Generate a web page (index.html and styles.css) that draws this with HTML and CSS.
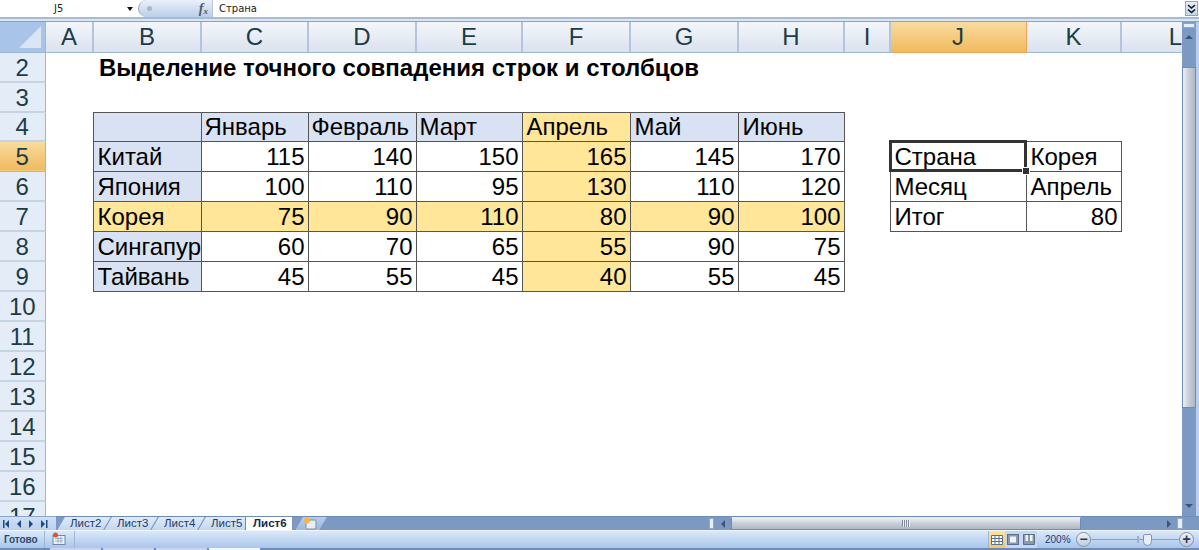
FILE: index.html
```html
<!DOCTYPE html>
<html lang="ru">
<head>
    <meta charset="UTF-8">
    <title>Лист6</title>
    <link rel="stylesheet" href="styles.css">
</head>
<body>
    <!-- formula bar -->
    <div class="formula-bar">
        <div class="name-box">J5</div>
        <div class="name-arrow"></div>
        <div class="fx-pill">
            <span class="fx-dot"></span>
            <span class="fx">f<sub>x</sub></span>
        </div>
        <div class="formula-text">Страна</div>
        <div class="expand-btn">
            <svg width="9" height="10" viewBox="0 0 9 10"><path d="M1 1l3.500 3L8 1M1 5.500l3.500 3L8 5.500" fill="none" stroke="#111" stroke-width="1.500"/></svg>
        </div>
    </div>
    <div class="bar-line"></div>

    <!-- sheet -->
    <div class="sheet-row">
        <div class="sheet">
            <table class="grid">
                <colgroup>
                    <col class="c-head"><col class="c-a"><col class="c-std"><col class="c-c"><col class="c-std"><col class="c-e">
                    <col class="c-std"><col class="c-std"><col class="c-e"><col class="c-i"><col class="c-j"><col class="c-k"><col class="c-l">
                </colgroup>
                <tr class="col-heads">
                    <th class="corner"><span class="corner-tri"></span></th>
                    <th>A</th><th>B</th><th>C</th><th>D</th><th>E</th><th>F</th><th>G</th><th>H</th><th>I</th>
                    <th class="sel-col">J</th><th>K</th><th class="cut-l">L</th>
                </tr>
                <tr>
                    <th class="rh">2</th><td></td>
                    <td class="title" colspan="7">Выделение точного совпадения строк и столбцов</td>
                    <td></td><td></td><td></td><td></td>
                </tr>
                <tr><th class="rh">3</th><td colspan="12"></td></tr>
                <tr class="row-4">
                    <th class="rh">4</th><td></td>
                    <td class="b lbl"></td><td class="b lbl mon">Январь</td><td class="b lbl mon">Февраль</td><td class="b lbl mon">Март</td>
                    <td class="b hl txt">Апрель</td><td class="b lbl">Май</td><td class="b lbl">Июнь</td>
                    <td colspan="4"></td>
                </tr>
                <tr>
                    <th class="rh sel-row">5</th><td></td>
                    <td class="b lbl">Китай</td><td class="b num">115</td><td class="b num">140</td><td class="b num">150</td>
                    <td class="b num hl">165</td><td class="b num">145</td><td class="b num">170</td><td></td>
                    <td class="b txt active-cell">Страна</td><td class="b txt">Корея</td><td></td>
                </tr>
                <tr>
                    <th class="rh">6</th><td></td>
                    <td class="b lbl">Япония</td><td class="b num">100</td><td class="b num">110</td><td class="b num">95</td>
                    <td class="b num hl">130</td><td class="b num">110</td><td class="b num">120</td><td></td>
                    <td class="b txt">Месяц</td><td class="b txt">Апрель</td><td></td>
                </tr>
                <tr>
                    <th class="rh">7</th><td></td>
                    <td class="b hl txt">Корея</td><td class="b num hl">75</td><td class="b num hl">90</td><td class="b num hl">110</td>
                    <td class="b num hl">80</td><td class="b num hl">90</td><td class="b num hl">100</td><td></td>
                    <td class="b txt">Итог</td><td class="b num">80</td><td></td>
                </tr>
                <tr>
                    <th class="rh">8</th><td></td>
                    <td class="b lbl clip"><div>Сингапур</div></td><td class="b num">60</td><td class="b num">70</td><td class="b num">65</td>
                    <td class="b num hl">55</td><td class="b num">90</td><td class="b num">75</td>
                    <td colspan="4"></td>
                </tr>
                <tr>
                    <th class="rh">9</th><td></td>
                    <td class="b lbl">Тайвань</td><td class="b num">45</td><td class="b num">55</td><td class="b num">45</td>
                    <td class="b num hl">40</td><td class="b num">55</td><td class="b num">45</td>
                    <td colspan="4"></td>
                </tr>
                <tr><th class="rh">10</th><td colspan="12"></td></tr>
                <tr><th class="rh">11</th><td colspan="12"></td></tr>
                <tr><th class="rh">12</th><td colspan="12"></td></tr>
                <tr><th class="rh">13</th><td colspan="12"></td></tr>
                <tr><th class="rh">14</th><td colspan="12"></td></tr>
                <tr><th class="rh">15</th><td colspan="12"></td></tr>
                <tr><th class="rh">16</th><td colspan="12"></td></tr>
                <tr><th class="rh">17</th><td colspan="12"></td></tr>
            </table>
        </div>
        <div class="vscroll">
            <div class="split-v"></div>
            <div class="arrow-up"></div>
            <div class="v-thumb"></div>
            <div class="arrow-down"></div>
        </div>
        <div class="edge"></div>
    </div>

    <!-- tabs and horizontal scrollbar -->
    <div class="tab-row">
        <div class="tab-nav">
            <svg width="52" height="14" viewBox="0 1 52 14" fill="#1c4a86">
                <path d="M3 4h1.500v8H3zM9 4v8L5 8zM21 4v8l-4-4zM29 4v8l4-4zM41 4v8l4-4zM46 4h1.500v8H46z"/>
            </svg>
        </div>
        <div class="tabs">
            <div class="tab">Лист2</div>
            <div class="tab">Лист3</div>
            <div class="tab">Лист4</div>
            <div class="tab">Лист5</div>
            <div class="tab active">Лист6</div>
            <div class="tab new-tab">
                <svg width="14" height="13" viewBox="0 0 14 13">
                    <rect x="3" y="3" width="10" height="9" rx="1" fill="#e8eef6" stroke="#7d8ea6"/>
                    <circle cx="4" cy="3.500" r="3" fill="#f5b83d"/>
                </svg>
            </div>
        </div>
        <div class="hscroll">
            <div class="split-h"></div>
            <div class="arrow-left"></div>
            <div class="h-thumb">
                <span class="grip"></span>
            </div>
            <div class="arrow-right"></div>
            <div class="split-end"></div>
        </div>
    </div>

    <!-- status bar -->
    <div class="status">
        <div class="ready">Готово</div>
        <div class="macro">
            <svg width="14" height="14" viewBox="0 0 14 13">
                <rect x="1" y="3" width="12" height="9" fill="#eef3fa" stroke="#6d87a8"/>
                <path d="M3 6h8M3 8.500h8M6 4v7M9 4v7" stroke="#8ba2c0" stroke-width=".8"/>
                <circle cx="3.500" cy="2.500" r="2.500" fill="#d8533a"/>
            </svg>
        </div>
        <div class="status-fill"></div>
        <div class="views">
            <div class="view on">
                <svg width="12" height="10" viewBox="0 0 12 10"><path d="M.5.5h11v9H.5zM.5 3.500h11M.5 6.500h11M4 .5v9M8 .5v9" fill="#fff" stroke="#5a6f8c"/></svg>
            </div>
            <div class="view">
                <svg width="12" height="11" viewBox="0 0 12 11"><rect x=".5" y=".5" width="11" height="10" fill="#8d9aaa" stroke="#5a6f8c"/><rect x="3" y="2.500" width="6" height="6" fill="#eef2f7"/></svg>
            </div>
            <div class="view">
                <svg width="12" height="11" viewBox="0 0 12 11"><path d="M.5.5h11v10H.5z" fill="#8d9aaa" stroke="#5a6f8c"/><path d="M2.500 1h2.500v6H2.500zM7 1h2.500v6H7z" fill="#eef2f7"/></svg>
            </div>
        </div>
        <div class="zoom-val">200%</div>
        <div class="zoom-slider">
            <div class="zoom-btn">&minus;</div>
            <div class="zoom-track">
                <span class="zoom-mid"></span>
                <span class="zoom-thumb"></span>
            </div>
            <div class="zoom-btn">+</div>
        </div>
    </div>
    <div class="taskbar-strip">
        <span></span><span></span><span></span><span class="lit"></span>
    </div>
</body>
</html>
```
FILE: styles.css
```css
* {
    box-sizing: border-box;
    padding: 0;
    margin: 0;
}

body {
    width: 1199px;
    height: 550px;
    overflow: hidden;
    display: flex;
    flex-direction: column;
    background: #fff;
    font-family: "Liberation Sans", Arial, sans-serif;
    color: #000;
}

/* formula bar */
.formula-bar {
    height: 17px;
    flex-shrink: 0;
    display: flex;
    align-items: center;
    background: #fff;
    font-family: "DejaVu Sans", sans-serif;
    font-size: 10px;
    color: #222;
}
.name-box {
    width: 125px;
    padding-left: 54px;
}
.name-arrow {
    width: 0;
    height: 0;
    margin: 1px 5px 0 2px;
    border: 3px solid transparent;
    border-top: 4px solid #111;
    border-bottom: 0;
}
.fx-pill {
    width: 75px;
    height: 17px;
    display: flex;
    align-items: center;
    justify-content: space-between;
    padding: 0 4px 0 8px;
    border-radius: 9px 0 0 9px;
    border-left: 1px solid #8fa9ca;
    border-right: 1px solid #b9cade;
    background: linear-gradient(#eaf1fa, #b9cee9);
}
.fx-dot {
    width: 5px;
    height: 5px;
    border-radius: 50%;
    background: #aab6c4;
}
.fx {
    font-family: "Liberation Serif", serif;
    font-style: italic;
    font-weight: bold;
    font-size: 14px;
    color: #4f5c6b;
}
.fx sub {
    font-size: 9px;
    vertical-align: -1px;
}
.formula-text {
    flex: 1;
    padding-left: 6px;
}
.expand-btn {
    width: 13px;
    height: 15px;
    margin-right: 1px;
    display: flex;
    align-items: center;
    justify-content: center;
    border: 1px solid #8ea6c6;
    background: linear-gradient(#e6eef9, #c3d5ec);
}
.bar-line {
    height: 5px;
    flex-shrink: 0;
    background: #dbe6f4;
    border-top: 2px solid #a7bbd2;
    border-bottom: 1px solid #86a3c6;
}

/* sheet */
.sheet-row {
    flex: 1;
    min-height: 0;
    display: flex;
}
.sheet {
    width: 1182px;
    overflow: hidden;
}
.grid {
    width: 1182px;
    table-layout: fixed;
    border-collapse: collapse;
    font-size: 24px;
}
.c-head { width: 45px; }
.c-a { width: 48px; }
.c-std { width: 108px; }
.c-c { width: 107px; }
.c-e { width: 106px; }
.c-i { width: 46px; }
.c-j { width: 136px; }
.c-k { width: 95px; }
.c-l { width: 61px; }

.grid tr {
    height: 30px;
}
.grid td, .grid th {
    height: 30px;
    line-height: 28px;
    vertical-align: bottom;
    white-space: nowrap;
    font-weight: normal;
}
.grid .row-4 {
    height: 29px;
}
.grid .row-4 td, .grid .row-4 th {
    height: 29px;
}

.col-heads th {
    text-align: center;
    color: #1c3c46;
    vertical-align: middle;
    background: linear-gradient(#f3f5fa, #dae2ee);
    border-right: 1px solid #b2c5dc;
    border-bottom: 1px solid #9eb6ce;
    box-shadow: inset -1px 0 0 #b2c5dc;
}
.col-heads .sel-col {
    background: linear-gradient(#f8dc9f, #f1b95d);
    border-left: 1px solid #eda75a;
    border-right: 1px solid #eda75a;
    border-bottom: 1px solid #eda75a;
    box-shadow: none;
}
.col-heads .cut-l {
    border-right: 0;
    box-shadow: none;
    text-align: right;
}
.col-heads .corner {
    background: #a9c4e9;
    border-right: 1px solid #9eb6ce;
    box-shadow: none;
    position: relative;
}
.corner-tri {
    position: absolute;
    right: 4px;
    bottom: 4px;
    width: 0;
    height: 0;
    border-left: 22px solid transparent;
    border-bottom: 22px solid #dbe5f3;
}
.grid .rh {
    color: #1c3c46;
    text-align: center;
    background: #e4ecf7;
    border-right: 1px solid #9eb6ce;
    border-bottom: 1px solid #c6d3e3;
    box-shadow: inset 0 -1px 0 #c6d3e3;
}
.grid .rh.sel-row {
    background: linear-gradient(#f8dc9f, #f1b95d);
    border-right: 1px solid #eda75a;
    border-bottom: 1px solid #eda75a;
    box-shadow: none;
}

.grid .title {
    font-weight: bold;
    padding-left: 6px;
    overflow: visible;
}
.b {
    border: 1px solid #555;
    padding: 0 4px;
}
.lbl {
    background: #d9e2f3;
}
.mon {
    padding-left: 3px;
}
.hl {
    background: #ffe699;
}
.num {
    text-align: right;
    padding-right: 3px;
}
.clip div {
    overflow: hidden;
    margin-right: -4px;
}
.active-cell {
    position: relative;
    outline: 3px solid #333;
    outline-offset: -2px;
}
.active-cell::after {
    content: "";
    position: absolute;
    right: -4px;
    bottom: -4px;
    width: 6px;
    height: 6px;
    background: #333;
    border: 1px solid #fff;
}

/* vertical scrollbar */
.vscroll {
    width: 14px;
    flex-shrink: 0;
    display: flex;
    flex-direction: column;
    align-items: center;
    background: #7c99c4;
}
.split-v {
    width: 12px;
    height: 5px;
    margin-top: 1px;
    background: #e8eff8;
    border: 1px solid #8da8cc;
}
.arrow-up {
    width: 0;
    height: 0;
    margin-top: 7px;
    border: 4px solid transparent;
    border-bottom: 4px solid #3f5472;
    border-top: 0;
}
.v-thumb {
    width: 14px;
    height: 341px;
    margin-top: 28px;
    border: 1px solid #6f8cb4;
    background: linear-gradient(90deg, #eef0f3, #c7ced8 50%, #aeb8c4);
}
.arrow-down {
    width: 0;
    height: 0;
    margin-top: 96px;
    border: 4px solid transparent;
    border-top: 4px solid #3f5472;
    border-bottom: 0;
}
.edge {
    width: 3px;
    flex-shrink: 0;
    background: #b9cfeb;
}

/* tabs */
.tab-row {
    height: 14px;
    flex-shrink: 0;
    display: flex;
    background: #7c99c4;
    font-size: 11.500px;
}
.tab-nav {
    width: 56px;
    background: linear-gradient(#cfdff4, #bcd1ec);
    border-top: 1px solid #8aa6cc;
}
.tab-nav svg {
    display: block;
}
.tabs {
    width: 652px;
    display: flex;
    border-top: 1px solid #6d8cb8;
    overflow: hidden;
    position: relative;
    z-index: 0;
}
.tab {
    position: relative;
    width: 47px;
    padding-left: 14px;
    line-height: 13px;
    color: #1d3c6e;
    white-space: nowrap;
    flex-shrink: 0;
}
.tab::before {
    content: "";
    position: absolute;
    z-index: -1;
    top: 0;
    bottom: 0;
    left: 4px;
    right: -4px;
    transform: skewX(-30deg);
    background: linear-gradient(#dfeafa, #c4d7f0);
    border-left: 1px solid #7f9dc4;
}
.tab.active {
    width: 46px;
    padding-left: 8px;
    margin-left: 1px;
    font-weight: bold;
    color: #15294d;
    z-index: 1;
}
.tab.active::before {
    left: 0;
    right: -1px;
    transform: none;
    background: #fff;
    border-left: 1px solid #6d8cb8;
}
.tab.new-tab {
    width: 32px;
    padding-left: 12px;
}
.new-tab::before {
    left: 7px;
    right: 0;
    background: linear-gradient(#b9cdea, #9eb8dc);
}
.new-tab svg {
    display: block;
}
.hscroll {
    flex: 1;
    display: flex;
    align-items: center;
    border-top: 1px solid #6d8cb8;
    position: relative;
}
.split-h {
    width: 5px;
    height: 11px;
    margin-left: 1px;
    background: #e8eff8;
    border: 1px solid #8da8cc;
}
.arrow-left {
    width: 0;
    height: 0;
    margin-left: 7px;
    border: 4px solid transparent;
    border-right: 4px solid #3f5472;
    border-left: 0;
}
.h-thumb {
    width: 350px;
    height: 13px;
    margin-left: 6px;
    display: flex;
    align-items: center;
    justify-content: center;
    border: 1px solid #6f8cb4;
    border-top-color: #e6ebf1;
    background: linear-gradient(#eef0f3, #c7ced8 50%, #aeb8c4);
}
.grip {
    width: 8px;
    height: 7px;
    background: repeating-linear-gradient(90deg, #7f8a98 0 1px, #eef0f3 1px 2px);
}
.arrow-right {
    width: 0;
    height: 0;
    margin-left: 86px;
    border: 4px solid transparent;
    border-left: 4px solid #3f5472;
    border-right: 0;
}
.split-end {
    width: 6px;
    height: 11px;
    margin-left: 6px;
    background: #e8eff8;
    border: 1px solid #8da8cc;
}

/* status bar */
.status {
    height: 18px;
    flex-shrink: 0;
    display: flex;
    align-items: center;
    background: linear-gradient(#dbe8f9, #aac6ec);
    border-top: 1px solid #f0f5fc;
    font-size: 10px;
    color: #20426f;
}
.ready {
    width: 45px;
    height: 100%;
    padding-left: 4px;
    line-height: 17px;
    font-weight: bold;
    letter-spacing: -.1px;
    color: #2c4a70;
    border-right: 1px solid #9db7da;
}
.macro {
    width: 30px;
    height: 100%;
    padding: 1px 0 0 7px;
    border-right: 1px solid #9db7da;
}
.macro svg {
    display: block;
}
.status-fill {
    flex: 1;
}
.views {
    display: flex;
    height: 17px;
    margin-right: 8px;
    border-left: 1px solid #9db7da;
    background: #c5d8f1;
}
.view {
    width: 16px;
    display: flex;
    align-items: center;
    justify-content: center;
}
.view.on {
    background: linear-gradient(#fde49f, #f8c65f);
}
.zoom-val {
    width: 31px;
    font-size: 10px;
    color: #1b3a78;
}
.zoom-slider {
    width: 118px;
    margin-right: 5px;
    display: flex;
    align-items: center;
}
.zoom-btn {
    width: 15px;
    height: 15px;
    flex-shrink: 0;
    border-radius: 50%;
    border: 1px solid #7f93ad;
    background: linear-gradient(#f0f4f9, #bccbe0);
    font-size: 14px;
    font-weight: bold;
    line-height: 12px;
    text-align: center;
    color: #2b3a4f;
}
.zoom-track {
    flex: 1;
    height: 1px;
    background: #87a2c8;
    display: flex;
    align-items: center;
    justify-content: center;
    position: relative;
}
.zoom-mid {
    position: absolute;
    left: 46px;
    width: 2px;
    height: 7px;
    background: #9db0c9;
}
.zoom-thumb {
    position: absolute;
    left: 52px;
    width: 9px;
    height: 12px;
    border: 1px solid #7f93ad;
    border-radius: 2px 2px 5px 5px;
    background: #e8eef6;
}
.taskbar-strip {
    height: 2px;
    flex-shrink: 0;
    display: flex;
    gap: 2px;
    padding-left: 50px;
    background: #6f8bb3;
}
.taskbar-strip span {
    width: 51px;
    background: #c9d5e6;
}
.taskbar-strip .lit {
    background: #f2f5fa;
}
```
